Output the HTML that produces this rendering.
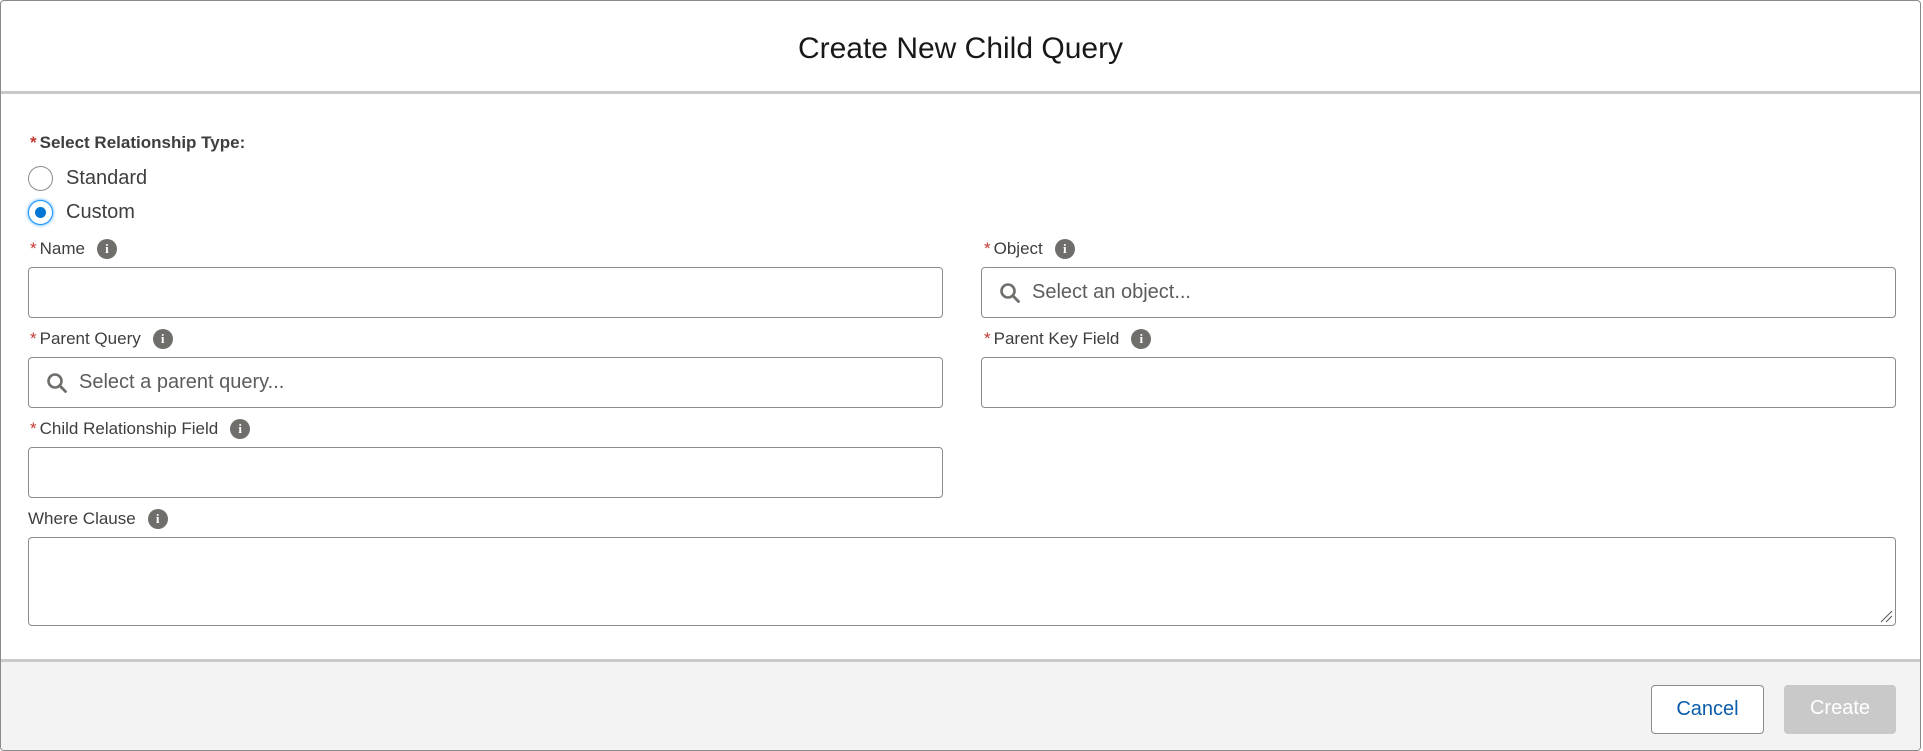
<!DOCTYPE html>
<html><head><style>
*{box-sizing:border-box;margin:0;padding:0}
body{width:1923px;height:751px;background:#fff;font-family:"Liberation Sans",sans-serif;position:relative;overflow:hidden;color:#3e3e3c}
.modal{position:absolute;left:0;top:0;width:1921px;height:751px;border:1px solid #8a8a8a;border-radius:4px;background:#fff;overflow:hidden}
.hdr{position:absolute;left:0;top:0;width:100%;height:93px;border-bottom:3px solid #c9c9c9}
.title{position:absolute;left:0;width:100%;top:31px;text-align:center;font-size:30px;color:#181818}
.lbl{position:absolute;font-size:17px;color:#3e3e3c;white-space:nowrap}
.req{color:#c23934;margin-right:3px}
.info{display:inline-block;width:20px;height:20px;border-radius:50%;background:#706e6b;color:#fff;font-size:13px;font-weight:bold;text-align:center;line-height:20px;vertical-align:1px;margin-left:12px;font-family:"Liberation Serif",serif}
.inp{position:absolute;border:1px solid #8c8c8c;border-radius:4px;background:#fff}
.ph{position:absolute;left:50px;top:13px;font-size:20px;color:#5c5c5c}
.mag{position:absolute;left:17px;top:14px}
.radio{position:absolute;width:25px;height:25px;border-radius:50%;border:1px solid #8c8c8c;background:#fff}
.foot{position:absolute;left:0;top:658px;width:100%;height:93px;background:#f3f3f3;border-top:3px solid #c9c9c9}
.btn{position:absolute;top:23px;height:49px;border-radius:4px;font-size:20px;text-align:center;line-height:47px}
</style></head><body>
<div class="modal">
<div class="hdr"><div class="title">Create New Child Query</div></div>

<div class="lbl" style="left:29px;top:132px;font-weight:bold;"><span class="req">*</span>Select Relationship Type:</div>
<div class="radio" style="left:27px;top:165px"></div>
<div class="lbl" style="left:65px;top:166px;font-size:20px">Standard</div>
<div class="radio" style="left:27px;top:199px;border-color:#1b96ff;box-shadow:0 0 3px #1b96ff"><div style="position:absolute;left:6px;top:6px;width:11px;height:11px;border-radius:50%;background:#0176d3"></div></div>
<div class="lbl" style="left:65px;top:200px;font-size:20px">Custom</div>

<div class="lbl" style="left:29px;top:238px"><span class="req">*</span>Name<span class="info">i</span></div>
<div class="inp" style="left:27px;top:266px;width:915px;height:51px"></div>

<div class="lbl" style="left:983px;top:238px"><span class="req">*</span>Object<span class="info">i</span></div>
<div class="inp" style="left:980px;top:266px;width:915px;height:51px">
<svg class="mag" width="22" height="22" viewBox="0 0 22 22"><circle cx="9" cy="9" r="6.5" fill="none" stroke="#706e6b" stroke-width="2.6"/><line x1="13.8" y1="13.8" x2="19.5" y2="19.5" stroke="#706e6b" stroke-width="2.8" stroke-linecap="round"/></svg>
<div class="ph">Select an object...</div></div>

<div class="lbl" style="left:29px;top:328px"><span class="req">*</span>Parent Query<span class="info">i</span></div>
<div class="inp" style="left:27px;top:356px;width:915px;height:51px">
<svg class="mag" width="22" height="22" viewBox="0 0 22 22"><circle cx="9" cy="9" r="6.5" fill="none" stroke="#706e6b" stroke-width="2.6"/><line x1="13.8" y1="13.8" x2="19.5" y2="19.5" stroke="#706e6b" stroke-width="2.8" stroke-linecap="round"/></svg>
<div class="ph">Select a parent query...</div></div>

<div class="lbl" style="left:983px;top:328px"><span class="req">*</span>Parent Key Field<span class="info">i</span></div>
<div class="inp" style="left:980px;top:356px;width:915px;height:51px"></div>

<div class="lbl" style="left:29px;top:418px"><span class="req">*</span>Child Relationship Field<span class="info">i</span></div>
<div class="inp" style="left:27px;top:446px;width:915px;height:51px"></div>

<div class="lbl" style="left:27px;top:508px">Where Clause<span class="info">i</span></div>
<div class="inp" style="left:27px;top:536px;width:1868px;height:89px">
<svg style="position:absolute;right:2px;bottom:2px" width="14" height="14" viewBox="0 0 14 14"><line x1="2" y1="13" x2="13" y2="2" stroke="#555" stroke-width="1"/><line x1="7" y1="13" x2="13" y2="7" stroke="#555" stroke-width="1"/></svg>
</div>

<div class="foot">
<div class="btn" style="left:1650px;width:113px;border:1px solid #8c8c8c;background:#fff;color:#0b5cab">Cancel</div>
<div class="btn" style="left:1783px;width:112px;background:#c9c9c9;color:#fff">Create</div>
</div>
</div>
</body></html>
